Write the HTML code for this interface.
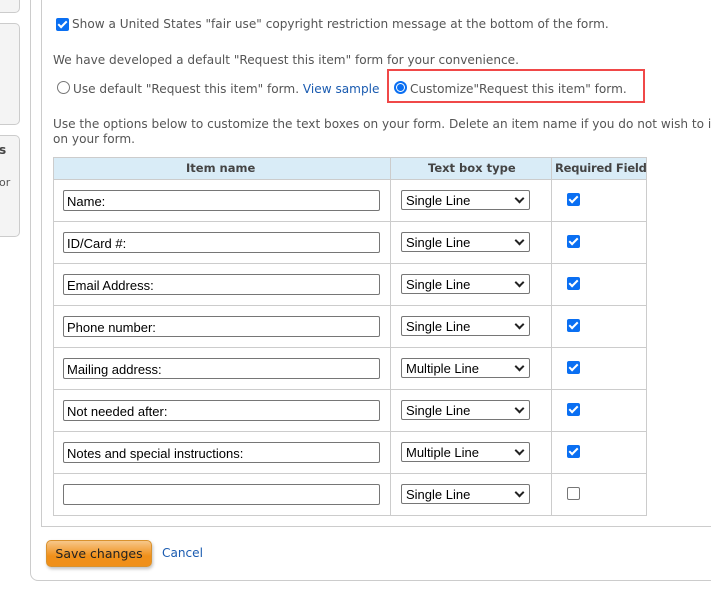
<!DOCTYPE html>
<html><head><style>
html,body{margin:0;width:711px;height:590px;overflow:hidden}
body{background:#fff;font-family:"DejaVu Sans",Verdana,sans-serif;font-size:12.1px;color:#555;position:relative}
.a{position:absolute;white-space:nowrap}
.sb{position:absolute;left:-10px;width:28px;border:1px solid #ccc;border-radius:5px;background:#f4f4f4;overflow:hidden}
.cb{position:absolute;width:13px;height:13px;border-radius:2px;background:#0a6ff2}
.cb:after{content:"";position:absolute;left:4px;top:1px;width:3px;height:7px;border:solid #fff;border-width:0 2px 2px 0;transform:rotate(45deg)}
.inp{position:absolute;left:63px;border:1px solid #767676;border-radius:2px;font:13px "Liberation Sans",Arial,sans-serif;color:#000;line-height:21px;padding-left:3px;box-sizing:border-box;width:317px;height:21px}
.sel{position:absolute;left:401px;width:129px;height:20px;border:1px solid #767676;border-radius:2px;box-sizing:border-box;font:13px "Liberation Sans",Arial,sans-serif;color:#000;line-height:20px;padding-left:4px}
.sel:after{content:"";position:absolute;right:6px;top:4px;width:5px;height:5px;border:solid #222;border-width:0 2px 2px 0;transform:rotate(45deg)}
.ucb{position:absolute;left:567px;width:11px;height:11px;border:1px solid #767676;border-radius:2px}
a{color:#1a5bb0;text-decoration:none}
.h{font-weight:bold;font-size:11.5px;color:#444}
</style></head><body>
<div class="sb" style="top:-10px;height:21px"></div>
<div class="sb" style="top:23px;height:100px"></div>
<div class="sb" style="top:135px;height:100px"><span class="a" style="left:8px;top:7px;font-weight:bold;color:#444">s</span><span class="a" style="left:8px;top:40px;font-size:11px">or</span></div>
<div class="a" style="left:30px;top:-10px;width:700px;height:589px;border:1px solid #ccc;border-radius:8px"></div>
<div class="a" style="left:41px;top:-10px;width:690px;height:536px;border-left:1px solid #ccc;border-bottom:1px solid #ccc"></div>
<div class="cb" style="left:56px;top:18px"></div>
<div class="a" style="left:72px;top:17px">Show a United States "fair use" copyright restriction message at the bottom of the form.</div>
<div class="a" style="left:53px;top:53px">We have developed a default "Request this item" form for your convenience.</div>
<div class="a" style="left:57px;top:81px;width:11px;height:11px;border:1px solid #777;border-radius:50%"></div>
<div class="a" style="left:73px;top:82px">Use default "Request this item" form. <a>View sample</a></div>
<div class="a" style="left:387px;top:69px;width:258px;height:34px;border:2px solid #f04848;box-sizing:border-box"></div>
<div class="a" style="left:394px;top:81px;width:9px;height:9px;border:2px solid #0a6ff2;border-radius:50%"></div>
<div class="a" style="left:397px;top:84px;width:7px;height:7px;background:#0a6ff2;border-radius:50%"></div>
<div class="a" style="left:410px;top:82px">Customize"Request this item" form.</div>
<div class="a" style="left:53px;top:117px;width:658px;overflow:hidden">Use the options below to customize the text boxes on your form. Delete an item name if you do not wish to include it</div>
<div class="a" style="left:53px;top:132px">on your form.</div>
<div class="a" style="left:53px;top:157px;width:594px;height:359px;border:1px solid #ccc;box-sizing:border-box"></div>
<div class="a" style="left:54px;top:158px;width:592px;height:21px;background:#d9ecf7;border-bottom:1px solid #ccc"></div>
<div class="a" style="left:390px;top:157px;width:1px;height:358px;background:#ccc"></div>
<div class="a" style="left:551px;top:157px;width:1px;height:358px;background:#ccc"></div>
<div class="a h" style="left:186px;top:161px">Item name</div>
<div class="a h" style="left:428px;top:161px">Text box type</div>
<div class="a h" style="left:555px;top:161px;letter-spacing:-0.2px">Required Field</div>
<div class="a" style="left:54px;top:221px;width:592px;height:1px;background:#ccc;box-shadow:0 42px #ccc,0 84px #ccc,0 126px #ccc,0 168px #ccc,0 210px #ccc,0 252px #ccc"></div>
<div class="inp" style="top:190px">Name:</div><div class="sel" style="top:190px">Single Line</div><div class="cb" style="left:567px;top:193px"></div>
<div class="inp" style="top:232px">ID/Card #:</div><div class="sel" style="top:232px">Single Line</div><div class="cb" style="left:567px;top:235px"></div>
<div class="inp" style="top:274px">Email Address:</div><div class="sel" style="top:274px">Single Line</div><div class="cb" style="left:567px;top:277px"></div>
<div class="inp" style="top:316px">Phone number:</div><div class="sel" style="top:316px">Single Line</div><div class="cb" style="left:567px;top:319px"></div>
<div class="inp" style="top:358px">Mailing address:</div><div class="sel" style="top:358px">Multiple Line</div><div class="cb" style="left:567px;top:361px"></div>
<div class="inp" style="top:400px">Not needed after:</div><div class="sel" style="top:400px">Single Line</div><div class="cb" style="left:567px;top:403px"></div>
<div class="inp" style="top:442px">Notes and special instructions:</div><div class="sel" style="top:442px">Multiple Line</div><div class="cb" style="left:567px;top:445px"></div>
<div class="inp" style="top:484px"></div><div class="sel" style="top:484px">Single Line</div><div class="ucb" style="top:487px"></div>
<div class="a" style="left:46px;top:540px;width:104px;height:25px;border:1px solid #d9922e;border-radius:5px;background:linear-gradient(#f7c78a,#f0901a 60%);box-shadow:1px 2px 3px rgba(0,0,0,.25);color:#222;text-align:center;line-height:25px;font-size:12.5px">Save changes</div>
<div class="a" style="left:162px;top:546px"><a>Cancel</a></div>
</body></html>
